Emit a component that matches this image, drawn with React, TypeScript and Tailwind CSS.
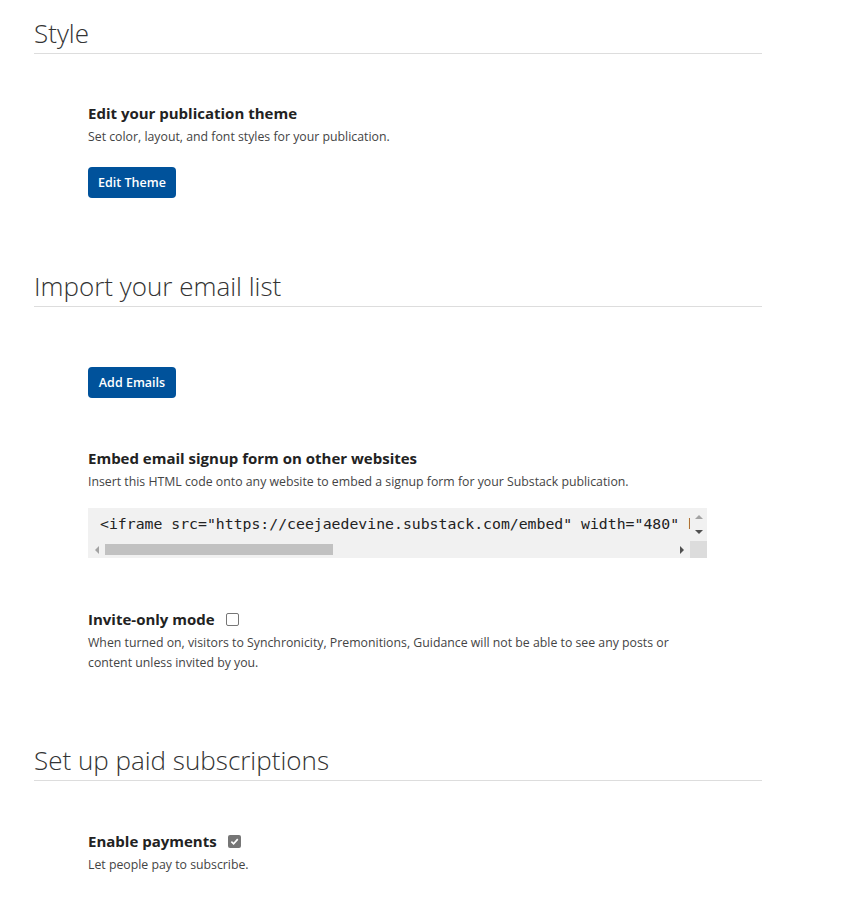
import React from 'react'

const font = { fontFamily: '"Open Sans", "Noto Sans", sans-serif' }

function Heading({ children, className = '' }: { children: React.ReactNode; className?: string }) {
  return (
    <h2 className={`text-[26px] font-light leading-[34px] text-[#333] pb-[3px] border-b border-[#ddd] ${className}`}>
      {children}
    </h2>
  )
}

function Title({ children }: { children: React.ReactNode }) {
  return <div className="text-[15px] font-bold leading-5 text-[#222]">{children}</div>
}

function Desc({ children }: { children: React.ReactNode }) {
  return <p className="mt-1 text-[12.3px] leading-5 text-[#444]">{children}</p>
}

function Button({ children }: { children: React.ReactNode }) {
  return (
    <button className="h-[31px] w-[88px] rounded-[4px] bg-[#00529b] pt-[2px] text-[12.5px] font-semibold text-white">
      {children}
    </button>
  )
}

function Arrow({ dir }: { dir: 'up' | 'down' | 'left' | 'right' }) {
  const pts = {
    up: '0,4 4,0 8,4',
    down: '0,0 8,0 4,4',
    left: '4,0 4,8 0,4',
    right: '0,0 0,8 4,4',
  }[dir]
  const w = dir === 'up' || dir === 'down' ? 8 : 4
  const h = dir === 'up' || dir === 'down' ? 4 : 8
  return (
    <svg width={w} height={h} viewBox={`0 0 ${w} ${h}`}>
      <polygon points={pts} fill={dir === 'up' || dir === 'left' ? '#a3a3a3' : '#505050'} />
    </svg>
  )
}

function CodeBox() {
  return (
    <div className="mt-4 w-[619px] bg-[#f1f1f1]">
      <div className="flex h-[33px]">
        <div className="min-w-0 flex-1 overflow-hidden pl-3 pt-[6px]">
          <pre
            className="whitespace-pre text-[14.8px] leading-[20px] text-[#222]"
            style={{ fontFamily: '"DejaVu Sans Mono", "Liberation Mono", monospace' }}
          >
            {'<iframe src="https://ceejaedevine.substack.com/embed" width="480" height="320"'}
          </pre>
        </div>
        <div className="flex w-[17px] flex-col items-center justify-between py-[7px]">
          <Arrow dir="up" />
          <Arrow dir="down" />
        </div>
      </div>
      <div className="flex h-[17px]">
        <div className="flex flex-1 items-center">
          <div className="flex w-[17px] justify-center">
            <Arrow dir="left" />
          </div>
          <div className="h-[11px] w-[228px] bg-[#c1c1c1]" />
          <div className="flex-1" />
          <div className="flex w-[17px] justify-center">
            <Arrow dir="right" />
          </div>
        </div>
        <div className="w-[17px] bg-[#dcdcdc]" />
      </div>
    </div>
  )
}

export default function App() {
  return (
    <div className="min-h-screen bg-white pl-[34px] pt-4" style={font}>
      <div className="w-[728px]">
        {/* Style */}
        <Heading>Style</Heading>
        <div className="ml-[54px] w-[619px]">
          <div className="mt-[49px]">
            <Title>Edit your publication theme</Title>
            <Desc>Set color, layout, and font styles for your publication.</Desc>
          </div>
          <div className="mt-5">
            <Button>Edit Theme</Button>
          </div>
        </div>

        {/* Import */}
        <Heading className="mt-[71px]">Import your email list</Heading>
        <div className="ml-[54px] w-[619px]">
          <div className="mt-[60px]">
            <Button>Add Emails</Button>
          </div>
          <div className="mt-[50px]">
            <Title>Embed email signup form on other websites</Title>
            <Desc>Insert this HTML code onto any website to embed a signup form for your Substack publication.</Desc>
          </div>
          <CodeBox />
          <div className="mt-[51px]">
            <div className="flex items-center">
              <Title>Invite-only mode</Title>
              <span className="ml-[11px] inline-block h-[13px] w-[13px] rounded-[2px] border border-[#767676] bg-white" />
            </div>
            <Desc>
              When turned on, visitors to Synchronicity, Premonitions, Guidance will not be able to see any posts or
              content unless invited by you.
            </Desc>
          </div>
        </div>

        {/* Paid */}
        <Heading className="mt-[70px]">Set up paid subscriptions</Heading>
        <div className="ml-[54px] w-[619px]">
          <div className="mt-[50px]">
            <div className="flex items-center">
              <Title>Enable payments</Title>
              <span className="ml-[11px] inline-flex h-[13px] w-[13px] items-center justify-center rounded-[2px] bg-[#767676]">
                <svg width="9" height="9" viewBox="0 0 10 10">
                  <path d="M1.5 5.2 L4 7.6 L8.6 2.4" fill="none" stroke="white" strokeWidth="1.8" />
                </svg>
              </span>
            </div>
            <Desc>Let people pay to subscribe.</Desc>
          </div>
        </div>
      </div>
    </div>
  )
}
